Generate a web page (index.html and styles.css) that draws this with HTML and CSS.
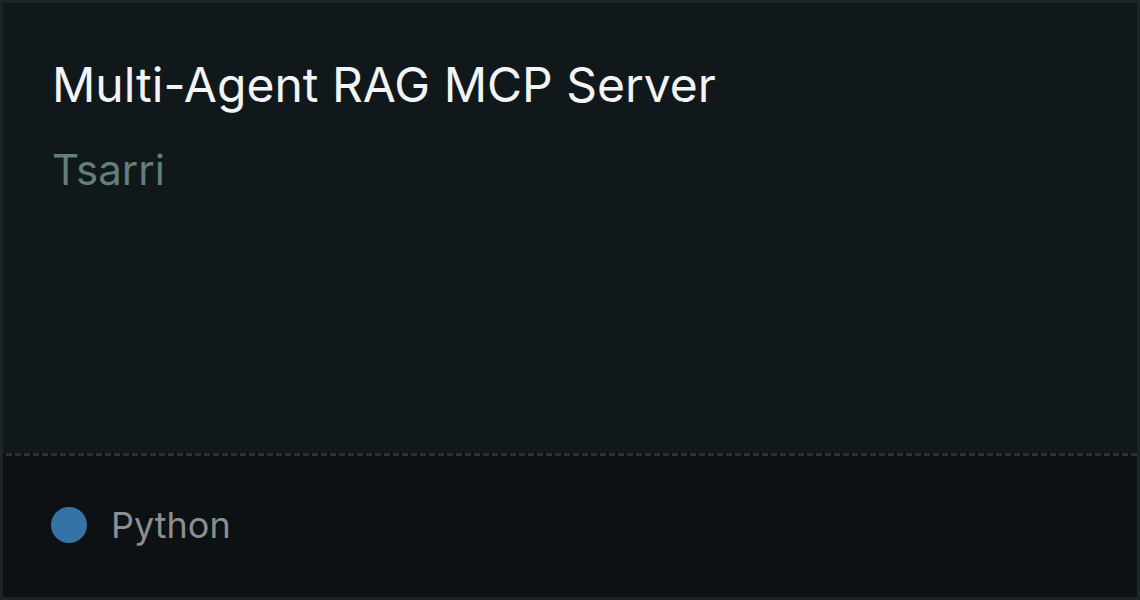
FILE: index.html
```html
<!DOCTYPE html>
<html lang="en">

<head>
    <meta charset="UTF-8">
    <meta name="viewport" content="width=device-width, initial-scale=1.0">
    <link rel="stylesheet" href="styles.css">
    <title>Multi-Agent RAG MCP Server</title>
</head>

<body>
    <div id="card">
        <div id="top">
            <h1 id="title">Multi-Agent RAG MCP Server</h1>
            <p id="owner">Tsarri</p>
        </div>
        <div id="bottom">
            <span class="lang-dot"></span>
            <span class="lang-name">Python</span>
        </div>
    </div>
</body>

</html>
```

FILE: styles.css
```css
body {
    margin: 0;
    background: #0d1114;
    font-family: 'Inter', 'Noto Sans', sans-serif;
}

#card {
    box-sizing: border-box;
    width: 1140px;
    height: 600px;
    border: 3px solid #1d2427;
    background: #11181b;
    display: grid;
    grid-template-rows: 1fr auto;
}

#top {
    padding: 53px 49px 0;
}

#title {
    margin: 0;
    font-size: 48px;
    line-height: 58px;
    font-weight: 400;
    color: #f2f4f5;
}

#owner {
    margin: 32px 0 0;
    font-size: 42px;
    line-height: 48px;
    color: #627f7a;
}

#bottom {
    position: relative;
    box-sizing: border-box;
    height: 144px;
    padding: 3px 48px 3px;
    background: #0d1114;
    display: flex;
    align-items: center;
    gap: 24px;
}

/* dashed divider */
#bottom::before {
    content: "";
    position: absolute;
    top: 0;
    left: 0;
    right: 0;
    height: 3px;
    background: repeating-linear-gradient(90deg, #2a3134 0 6px, transparent 6px 9px);
    background-position: 3px 0;
}

.lang-dot {
    width: 36px;
    height: 36px;
    border-radius: 50%;
    background: #3572a5;
}

.lang-name {
    font-size: 36px;
    line-height: 44px;
    color: #8b8f92;
}
```
